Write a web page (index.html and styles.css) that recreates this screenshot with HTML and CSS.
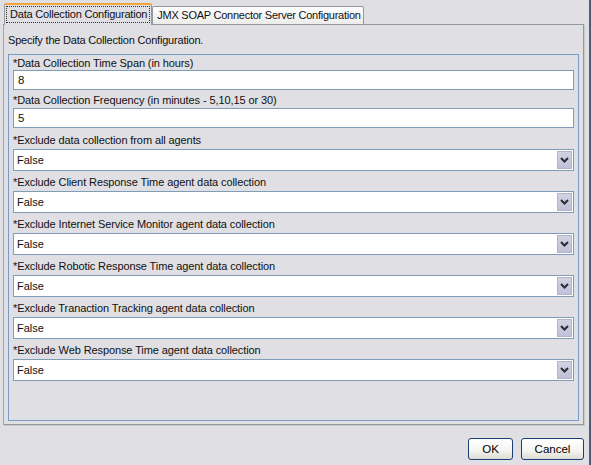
FILE: index.html
```html
<!DOCTYPE html>
<html>
<head>
<meta charset="utf-8">
<link rel="stylesheet" href="styles.css">
</head>
<body>
<div class="window">
  <div class="tabs">
    <div class="tab active"><span class="focus">Data Collection Configuration</span></div>
    <div class="tab">JMX SOAP Connector Server Configuration</div>
  </div>
  <div class="panel">
    <div class="desc">Specify the Data Collection Configuration.</div>
    <div class="group">
      <div class="row">
        <div class="lbl">*Data Collection Time Span (in hours)</div>
        <div class="field">8</div>
      </div>
      <div class="row last-text">
        <div class="lbl">*Data Collection Frequency (in minutes - 5,10,15 or 30)</div>
        <div class="field">5</div>
      </div>
      <div class="row sel-row">
        <div class="lbl">*Exclude data collection from all agents</div>
        <div class="combo"><span class="val">False</span><span class="arrow"><svg width="9" height="6" viewBox="0 0 9 6"><path d="M1 1 L4.5 4.5 L8 1" fill="none" stroke="#2b2b33" stroke-width="2"/></svg></span></div>
      </div>
      <div class="row sel-row">
        <div class="lbl">*Exclude Client Response Time agent data collection</div>
        <div class="combo"><span class="val">False</span><span class="arrow"><svg width="9" height="6" viewBox="0 0 9 6"><path d="M1 1 L4.5 4.5 L8 1" fill="none" stroke="#2b2b33" stroke-width="2"/></svg></span></div>
      </div>
      <div class="row sel-row">
        <div class="lbl">*Exclude Internet Service Monitor agent data collection</div>
        <div class="combo"><span class="val">False</span><span class="arrow"><svg width="9" height="6" viewBox="0 0 9 6"><path d="M1 1 L4.5 4.5 L8 1" fill="none" stroke="#2b2b33" stroke-width="2"/></svg></span></div>
      </div>
      <div class="row sel-row">
        <div class="lbl">*Exclude Robotic Response Time agent data collection</div>
        <div class="combo"><span class="val">False</span><span class="arrow"><svg width="9" height="6" viewBox="0 0 9 6"><path d="M1 1 L4.5 4.5 L8 1" fill="none" stroke="#2b2b33" stroke-width="2"/></svg></span></div>
      </div>
      <div class="row sel-row">
        <div class="lbl">*Exclude Tranaction Tracking agent data collection</div>
        <div class="combo"><span class="val">False</span><span class="arrow"><svg width="9" height="6" viewBox="0 0 9 6"><path d="M1 1 L4.5 4.5 L8 1" fill="none" stroke="#2b2b33" stroke-width="2"/></svg></span></div>
      </div>
      <div class="row sel-row">
        <div class="lbl">*Exclude Web Response Time agent data collection</div>
        <div class="combo"><span class="val">False</span><span class="arrow"><svg width="9" height="6" viewBox="0 0 9 6"><path d="M1 1 L4.5 4.5 L8 1" fill="none" stroke="#2b2b33" stroke-width="2"/></svg></span></div>
      </div>
    </div>
  </div>
  <div class="buttons">
    <button class="btn ok">OK</button>
    <button class="btn cancel">Cancel</button>
  </div>
</div>
</body>
</html>
```
FILE: styles.css
```css
html, body {
  margin: 0;
  padding: 0;
  background: #dfdfe4;
}
body {
  font-family: "Liberation Sans", Arial, sans-serif;
  font-size: 11px;
  color: #111;
}
.window {
  width: 589px;
  height: 465px;
  border-right: 2px solid #545a72;
  background: #dfdfe4;
  box-sizing: content-box;
}
.tabs {
  display: flex;
  align-items: flex-end;
  padding-left: 4px;
  padding-top: 3px;
  height: 21px;
  position: relative;
  z-index: 2;
}
.tab {
  height: 17px;
  line-height: 17px;
  padding: 0 2px 0 4px;
  border: 1px solid #919b9c;
  border-bottom: none;
  border-radius: 2px 2px 0 0;
  background: linear-gradient(#fefefe, #ececeb);
  font-size: 11px;
  letter-spacing: -0.25px;
  white-space: nowrap;
}
.tab.active {
  height: 20px;
  line-height: 19px;
  padding: 0 1px;
  border-top: 2px solid #f4a53a;
  border-color: #f4a53a #919b9c #919b9c #919b9c;
  background: #dfdfe4;
  margin-bottom: -1px;
  position: relative;
  letter-spacing: -0.2px;
}
.focus {
  display: inline-block;
  line-height: 15px;
  padding: 0 2px 0 3px;
  border: 1px dotted #333;
}
.panel {
  margin-left: 3px;
  margin-right: 5px;
  height: 401px;
  border: 1px solid #919b9c;
  border-left-color: #a0a6a8;
  box-shadow: 1px 1px 0 #c8ccc4;
  box-sizing: border-box;
  padding: 0 4px;
  background: #dfdfe4;
  position: relative;
  z-index: 1;
}
.desc {
  height: 29px;
  line-height: 30px;
  font-size: 11px;
  letter-spacing: -0.2px;
}
.group {
  height: 367px;
  border: 1px solid #7a9cc4;
  box-sizing: border-box;
  padding: 0 4px;
}
.lbl {
  height: 16px;
  line-height: 16px;
  white-space: nowrap;
  letter-spacing: -0.1px;
}
.row {
  margin-bottom: 2px;
}
.row:first-child .lbl {
  height: 15px;
}
.row.last-text {
  margin-bottom: 1px;
}
.field {
  height: 20px;
  border: 1px solid #7f9db9;
  background: #fff;
  box-sizing: border-box;
  line-height: 18px;
  padding-left: 4px;
  font-size: 11.5px;
}
.sel-row {
  margin: 0;
  padding-top: 3px;
}
.sel-row .lbl {
  height: 17px;
}
.combo {
  height: 22px;
  border: 1px solid #7f9db9;
  background: #fff;
  box-sizing: border-box;
  display: flex;
  align-items: center;
  justify-content: space-between;
  padding-left: 3px;
  padding-right: 1px;
  font-size: 11px;
}
.arrow {
  width: 15px;
  height: 18px;
  background: linear-gradient(#d2d2e4, #c0c0d8);
  border: 1px solid #b4b4c8;
  box-sizing: border-box;
  display: flex;
  align-items: center;
  justify-content: center;
}
.buttons {
  display: flex;
  justify-content: flex-end;
  gap: 8px;
  padding-right: 5px;
  margin-top: 13px;
}
.btn {
  height: 22px;
  border: 1px solid #1c3e74;
  border-radius: 3px;
  background: linear-gradient(#ffffff 0%, #f4f4f0 60%, #dcdcd6 100%);
  font-family: "Liberation Sans", Arial, sans-serif;
  font-size: 11.5px;
  color: #000;
  padding: 0;
}
.btn.ok { width: 45px; }
.btn.cancel { width: 63px; }
```
